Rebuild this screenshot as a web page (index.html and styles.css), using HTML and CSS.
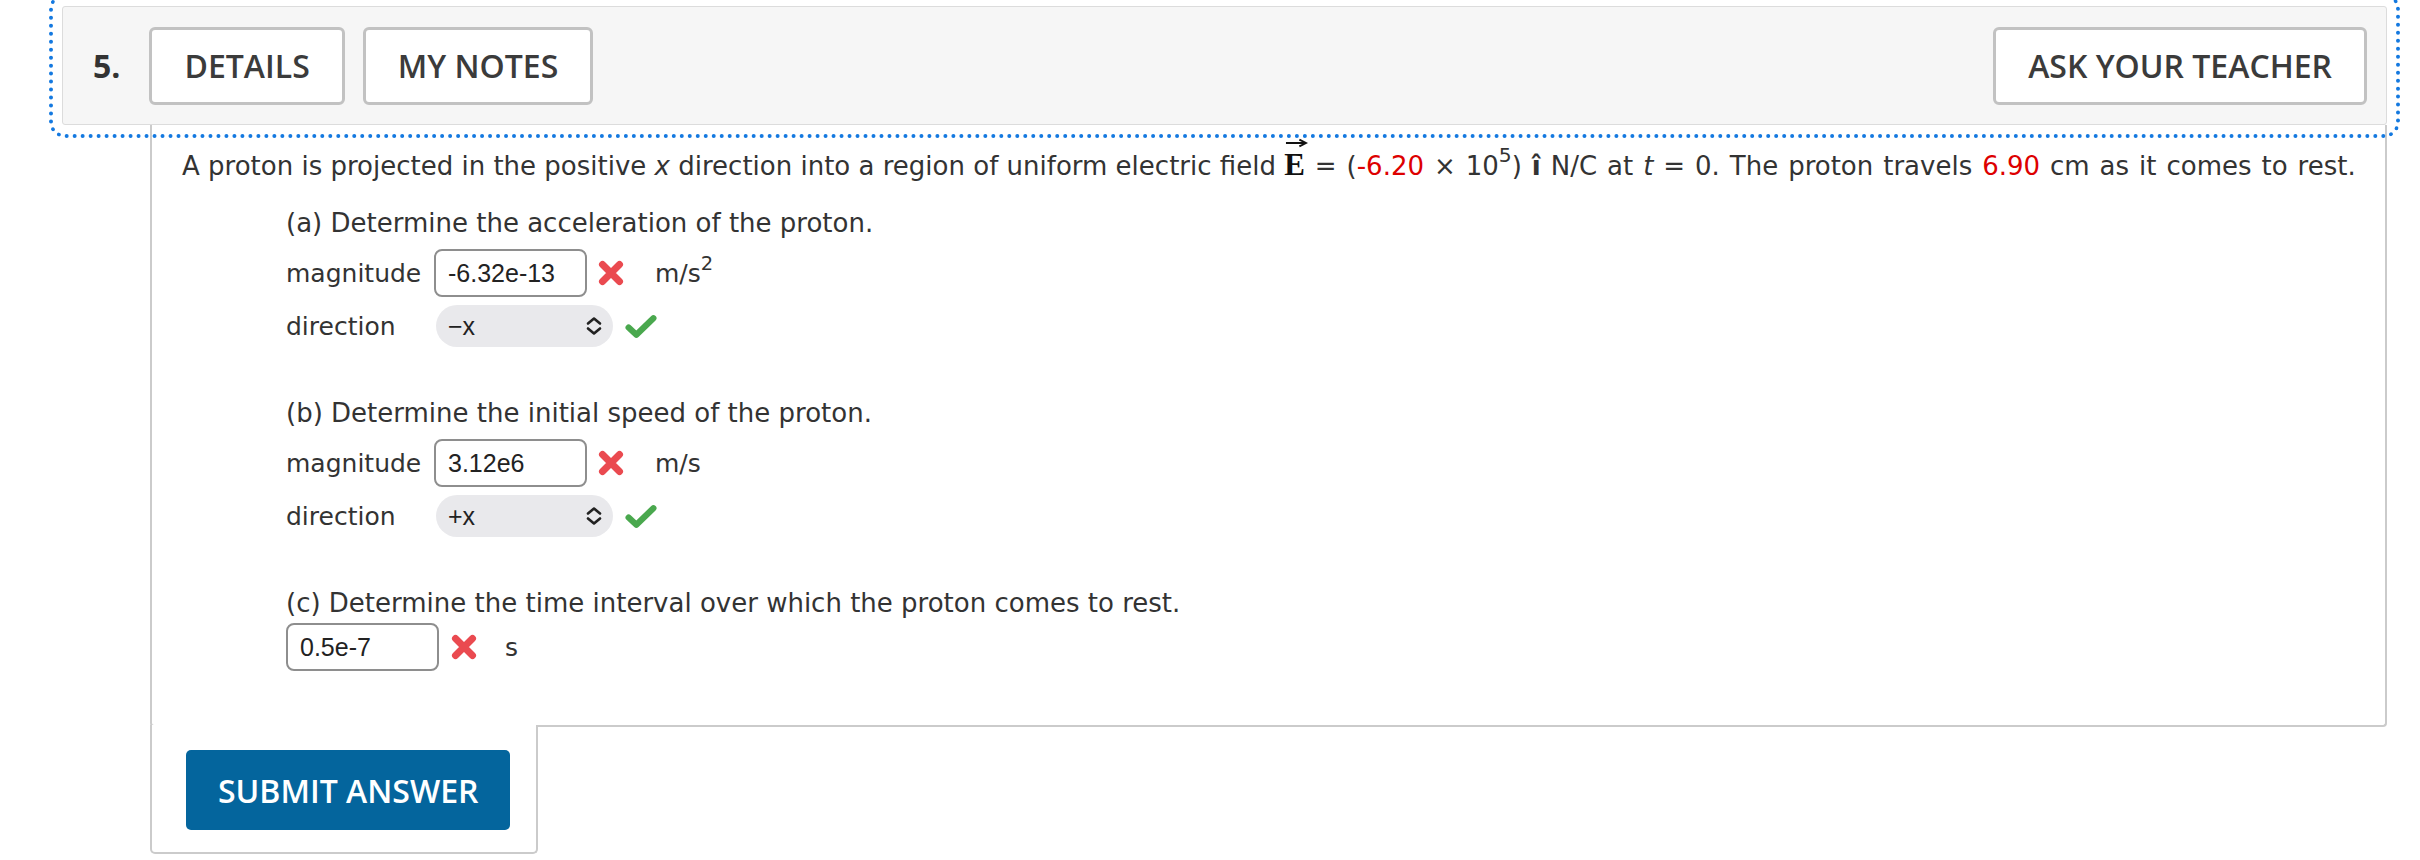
FILE: index.html
```html
<!DOCTYPE html>
<html>
<head>
<meta charset="utf-8">
<link rel="stylesheet" href="styles.css">
</head>
<body>
<div class="page">
  <div class="qhead">
    <span class="qnum">5.</span>
    <button class="hbtn">DETAILS</button>
    <button class="hbtn">MY NOTES</button>
    <button class="hbtn ask">ASK YOUR TEACHER</button>
  </div>
  <div class="qbody">
    <p class="stem">A proton is projected in the positive <i>x</i> direction into a region of uniform electric field <span class="vec">E<svg class="vecarrow" viewBox="0 0 24 10"><path d="M1 5 H21 M15 1.5 L22 5 L15 8.5" fill="none" stroke="#111" stroke-width="2"/></svg></span><span class="stem-tail"> = (<span class="red">-6.20</span> × 10<sup>5</sup>) <b class="ihat">î</b> N/C at <i>t</i> = 0. The proton travels <span class="red">6.90</span> cm as it comes to rest.</span></p>

    <div class="part">
      <p class="ptitle">(a) Determine the acceleration of the proton.</p>
      <div class="row mag">
        <span class="lbl">magnitude</span>
        <input class="ans" type="text" value="-6.32e-13">
        <svg class="xmark" viewBox="0 0 28 26"><path d="M5.5 4.5 L22.5 21.5 M22.5 4.5 L5.5 21.5" stroke="#ea4a50" stroke-width="7" stroke-linecap="round"/></svg>
        <span class="unit">m/s<sup>2</sup></span>
      </div>
      <div class="row dir">
        <span class="lbl">direction</span>
        <span class="selwrap">
          <select class="sel"><option>−x</option></select>
          <svg class="chev" viewBox="0 0 18 20"><path d="M3 7.5 L9 2.5 L15 7.5 M3 12.5 L9 17.5 L15 12.5" fill="none" stroke="#222" stroke-width="2.6" stroke-linecap="round" stroke-linejoin="round"/></svg>
        </span>
        <svg class="check" viewBox="0 0 31 24"><path d="M3.5 13 L11 20 L27.5 4" fill="none" stroke="#4aa84e" stroke-width="6" stroke-linecap="round" stroke-linejoin="round"/></svg>
      </div>
    </div>

    <div class="part">
      <p class="ptitle">(b) Determine the initial speed of the proton.</p>
      <div class="row mag">
        <span class="lbl">magnitude</span>
        <input class="ans" type="text" value="3.12e6">
        <svg class="xmark" viewBox="0 0 28 26"><path d="M5.5 4.5 L22.5 21.5 M22.5 4.5 L5.5 21.5" stroke="#ea4a50" stroke-width="7" stroke-linecap="round"/></svg>
        <span class="unit">m/s</span>
      </div>
      <div class="row dir">
        <span class="lbl">direction</span>
        <span class="selwrap">
          <select class="sel"><option>+x</option></select>
          <svg class="chev" viewBox="0 0 18 20"><path d="M3 7.5 L9 2.5 L15 7.5 M3 12.5 L9 17.5 L15 12.5" fill="none" stroke="#222" stroke-width="2.6" stroke-linecap="round" stroke-linejoin="round"/></svg>
        </span>
        <svg class="check" viewBox="0 0 31 24"><path d="M3.5 13 L11 20 L27.5 4" fill="none" stroke="#4aa84e" stroke-width="6" stroke-linecap="round" stroke-linejoin="round"/></svg>
      </div>
    </div>

    <div class="part">
      <p class="ptitle">(c) Determine the time interval over which the proton comes to rest.</p>
      <div class="row single">
        <input class="ans" type="text" value="0.5e-7">
        <svg class="xmark" viewBox="0 0 28 26"><path d="M5.5 4.5 L22.5 21.5 M22.5 4.5 L5.5 21.5" stroke="#ea4a50" stroke-width="7" stroke-linecap="round"/></svg>
        <span class="unit unit-s">s</span>
      </div>
    </div>
  </div>
  <div class="submit-tab">
    <button class="submit">SUBMIT ANSWER</button>
  </div>
</div>
</body>
</html>
```

FILE: styles.css
```css
* { box-sizing: border-box; }
html, body { margin: 0; padding: 0; background: #fff; }
body {
  font-family: "DejaVu Sans", Verdana, sans-serif;
  font-size: 25px;
  color: #333;
}
.page { padding: 6px 33px 0 62px; }

.qhead {
  display: flex;
  align-items: center;
  height: 119px;
  padding: 0 19px 0 30px;
  background: #f6f6f6;
  border: 1px solid #dcdcdc;
  border-radius: 3px;
  outline: 4px dotted #1479e0;
  outline-offset: 9px;
  position: relative;
  z-index: 1;
}
.qnum {
  font-family: "Open Sans", sans-serif;
  font-weight: 700;
  font-size: 32px;
  color: #333;
  margin-right: 29px;
}
.hbtn {
  height: 78px;
  padding: 0 32px;
  border: 3px solid #c2c2c2;
  border-radius: 6px;
  background: #fff;
  font-family: "Open Sans", sans-serif;
  font-weight: 600;
  font-size: 32px;
  color: #3b3b3b;
  margin-right: 18px;
}
.hbtn.ask { margin-left: auto; margin-right: 0; }

.qbody {
  margin-left: 88px;
  border: 2px solid #cbcbcb;
  border-top: none;
  border-radius: 0 0 4px 4px;
  padding: 22px 30px 54px 30px;
}
.stem {
  margin: 0;
  line-height: 38px;
  font-size: 26px;
  white-space: nowrap;
}
.stem-tail { word-spacing: 1.7px; }
.red { color: #dd0000; }
sup { font-size: 0.78em; line-height: 0; vertical-align: 0.62em; }
.vec {
  position: relative;
  font-family: "Liberation Serif", "Times New Roman", serif;
  font-weight: 700;
  font-size: 31px;
  line-height: 1;
  color: #111;
}
.vecarrow {
  position: absolute;
  left: 1px;
  top: -9px;
  width: 23px;
  height: 10px;
}
.ihat { font-weight: 700; }

.part { margin: 19px 0 0 104px; }
.part + .part { margin-top: 47px; }
.ptitle { margin: 0; line-height: 38px; font-size: 26px; }
.row { display: flex; align-items: center; }
.row.mag { margin-top: 7px; height: 48px; }
.row.dir { margin-top: 8px; height: 42px; }
.row.single { margin-top: 1px; height: 48px; }

.lbl { width: 148px; flex: none; }
.ans {
  width: 153px;
  height: 48px;
  border: 2px solid #8e8e8e;
  border-radius: 8px;
  padding: 0 12px;
  font-family: "Liberation Sans", Arial, sans-serif;
  font-size: 25px;
  color: #222;
  background: #fff;
}
.xmark { width: 28px; height: 26px; margin-left: 10px; flex: none; }
.single .xmark { margin-left: 11px; }
.unit { margin-left: 30px; }
.unit-s { margin-left: 27px; }

.selwrap { position: relative; margin-left: 2px; display: inline-flex; }
.sel {
  appearance: none;
  -webkit-appearance: none;
  width: 177px;
  height: 42px;
  border: none;
  border-radius: 21px;
  background: #e9e9ec;
  padding: 0 0 0 12px;
  font-family: "Liberation Sans", Arial, sans-serif;
  font-size: 25px;
  color: #222;
}
.chev {
  position: absolute;
  right: 10px;
  top: 11px;
  width: 18px;
  height: 20px;
  pointer-events: none;
}
.check { width: 32px; height: 25px; margin-left: 12px; flex: none; }

.submit-tab {
  margin-left: 88px;
  width: 388px;
  margin-top: -2px;
  background: #fff;
  border: 2px solid #cbcbcb;
  border-top: none;
  border-radius: 0 0 5px 5px;
  padding: 25px 0 22px 34px;
  position: relative;
}
.submit {
  height: 80px;
  padding: 0 32px;
  background: #04659d;
  color: #fff;
  border: none;
  border-radius: 5px;
  font-family: "Open Sans", sans-serif;
  font-weight: 600;
  font-size: 32px;
}
```
